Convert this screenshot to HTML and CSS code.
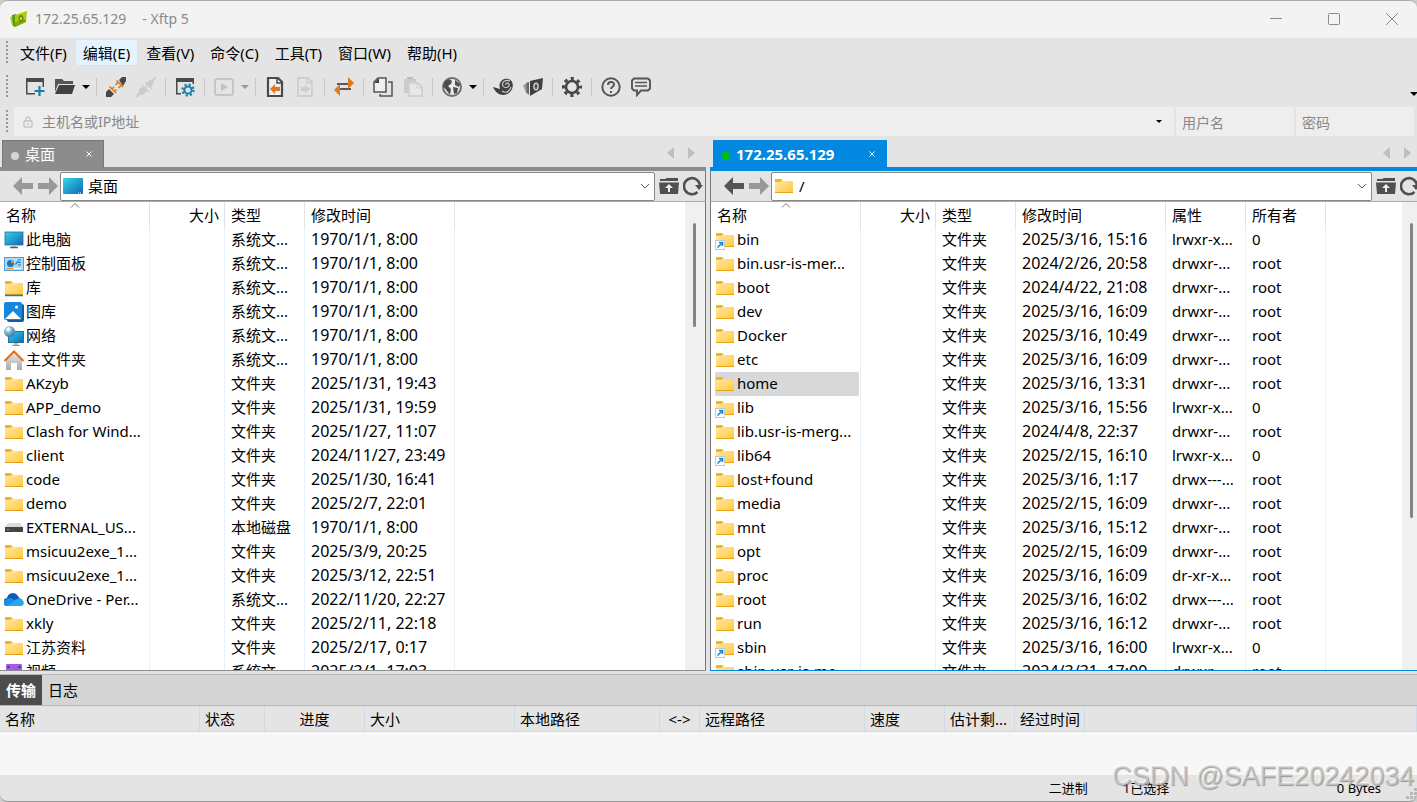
FILE: index.html
```html
<!DOCTYPE html>
<html lang="zh-CN">
<head>
    <meta charset="UTF-8">
    <meta name="viewport" content="width=device-width, initial-scale=1.0">
    <title>172.25.65.129 - Xftp 5</title>
    <link rel="stylesheet" href="styles.css">
</head>
<body>
    <!-- Icon library -->
    <svg class="icon-defs" aria-hidden="true">
        <defs>
            <linearGradient id="gFolder" x1="0" y1="0" x2="1" y2="1">
                <stop offset="0" stop-color="#ffe9a2"/><stop offset="1" stop-color="#ffc83d"/>
            </linearGradient>
            <linearGradient id="gScreen" x1="0" y1="0" x2="1" y2="1">
                <stop offset="0" stop-color="#35d5e8"/><stop offset="1" stop-color="#0f68b8"/>
            </linearGradient>
            <linearGradient id="gHouse" x1="0" y1="0" x2="0" y2="1">
                <stop offset="0" stop-color="#e8e8e8"/><stop offset="1" stop-color="#a9a9a9"/>
            </linearGradient>
            <radialGradient id="gGlobe" cx=".35" cy=".3" r=".8">
                <stop offset="0" stop-color="#c5e8f5"/><stop offset="1" stop-color="#2a6f9c"/>
            </radialGradient>
        </defs>
        <symbol id="i-logo" viewBox="0 0 20 20">
            <path d="M1 8l3-1 2 11-3-2z" fill="#a4cf2c"/>
            <path d="M3 6l4-1v13l-3-1z" fill="#5d9b12"/>
            <path d="M6 6l12-4-1 11-11 5z" fill="#b2cc08"/>
            <path d="M6 13l11-3v3l-11 5z" fill="#7fae0c"/>
            <ellipse cx="12" cy="9.500" rx="2.500" ry="3.500" fill="#5f8d0b"/><ellipse cx="12" cy="9.500" rx="1" ry="1.500" fill="#dbe86d"/>
        </symbol>
        <symbol id="i-new" viewBox="0 0 20 20">
            <path d="M1 1h18v9h-1.500V5h-15v11H10v1.500H1z" fill="#4a4a4a"/>
            <path d="M14.500 9v10M9.500 14h10" stroke="#1b7ca8" stroke-width="2.200"/>
        </symbol>
        <symbol id="i-open" viewBox="0 0 20 20">
            <path d="M0 2h7l2 2h9v3H3L0 15z" fill="#555"/><path d="M4 8h16l-3 9H0z" fill="#404040"/>
        </symbol>
        <symbol id="i-plug" viewBox="0 0 20 20">
            <path d="M13 3l3-3h4v4l-3 5z" fill="#484848"/><path d="M0 20v-5l3-3 5 5-3 3z" fill="#484848"/>
            <path d="M10.500 3.500l6.500 6.500M3.500 9.500L10 16M12 5.500l-2.500 2.500M15 8.500L12.500 11M6 12l2-2M8.500 14.500l2-2" stroke="#dd7a1d" stroke-width="1.700" fill="none"/>
        </symbol>
        <symbol id="i-unplug" viewBox="0 0 20 20">
            <path d="M0 20l5-5M15 5l5-5" stroke="#cbcbcb" stroke-width="2"/>
            <path d="M3 12l4-2 4 4-4 4H4l-1-2zM10 6l4-3h3l1 3-4 5z" fill="#cbcbcb"/>
            <path d="M6 8l7 7M9 5l7 7M8 12l5-5" stroke="#cbcbcb" stroke-width="1.300"/>
        </symbol>
        <symbol id="i-props" viewBox="0 0 20 20">
            <path d="M1 1h18v6h-1.500V5h-15v11H6v1.500H1z" fill="#4a4a4a"/>
            <circle cx="13" cy="13" r="3.600" fill="none" stroke="#1b7ca8" stroke-width="2"/>
            <circle cx="13" cy="13" r="5.500" fill="none" stroke="#1b7ca8" stroke-width="2.200" stroke-dasharray="2.100 2.220"/>
        </symbol>
        <symbol id="i-play" viewBox="0 0 20 20">
            <rect x="1" y="2" width="18" height="16" rx="2" fill="none" stroke="#c6c6c6" stroke-width="2"/><path d="M7 6l7 4-7 4z" fill="#c2c2c2"/>
        </symbol>
        <symbol id="i-down" viewBox="0 0 8 4"><path d="M0 0h8L4 4z" fill="currentColor"/></symbol>
        <symbol id="i-pageleft" viewBox="0 0 20 20">
            <path d="M3 1h10l4 4v14H3z" fill="#f0f0f0" stroke="#4a4a4a" stroke-width="2.200"/><path d="M12 0v6h6" fill="none" stroke="#4a4a4a" stroke-width="1.500"/>
            <path d="M5 12l5-5v3h5v4h-5v3z" fill="#dd7a1d"/>
        </symbol>
        <symbol id="i-pageright" viewBox="0 0 20 20">
            <path d="M3 1h10l4 4v14H3z" fill="none" stroke="#cecece" stroke-width="1.800"/><path d="M12 0v6h6" fill="none" stroke="#cecece" stroke-width="1.500"/>
            <path d="M15 12l-5-4v2H6v4h4v2z" fill="#cecece"/>
        </symbol>
        <symbol id="i-swap" viewBox="0 0 20 20">
            <path d="M3 7h11M6 12h11" stroke="#5a5a5a" stroke-width="2"/>
            <path d="M14 0l6 6-6 6zM6 7v12l-6-6z" fill="#dd7a1d"/>
        </symbol>
        <symbol id="i-copy" viewBox="0 0 20 20">
            <path d="M5 1h8v14H1V5z" fill="#efefef" stroke="#555" stroke-width="1.500"/><path d="M1 6l5-5v5z" fill="#444"/>
            <path d="M15 5h4v14H7v-2" fill="none" stroke="#555" stroke-width="1.500"/>
        </symbol>
        <symbol id="i-paste" viewBox="0 0 20 20">
            <path d="M1 2h12v3H8L5 8v8H1z" fill="#cbcbcb"/><path d="M4 1h6" stroke="#bdbdbd" stroke-width="2"/>
            <path d="M6 6h9l4 4v9H6z" fill="#e8e8e8" stroke="#cbcbcb" stroke-width="1.500"/><path d="M14 6v5h5" fill="none" stroke="#cbcbcb"/>
        </symbol>
        <symbol id="i-globe" viewBox="0 0 20 20">
            <circle cx="10" cy="10" r="9" fill="#e9e9e9" stroke="#707070" stroke-width="2"/>
            <path d="M3 4l4-2 3 2-1 3-3 2 3 3-1 6-3-4-4-5zM13 3l5 4-1 3-4-2zM11 10l5 1-1 5-3 1z" fill="#4c4c4c"/>
        </symbol>
        <symbol id="i-shell" viewBox="0 0 20 20">
            <path d="M0 10l7 2c-2-7 3-11 8-10 6 1 6 9 2 13-5 5-13 4-17-5z" fill="#404040"/>
            <path d="M17 4c-4-2-9 1-7 5 2 3 7 1 6-2-1-2-4-1-3 1M9 14c4 3 8 0 9-4" fill="none" stroke="#c9c9c9" stroke-width="1.200"/>
        </symbol>
        <symbol id="i-xftp" viewBox="0 0 20 20">
            <path d="M0 8l3-1 2 10-2-1z" fill="#999"/><path d="M3 6l3-1v13l-2-2z" fill="#666"/><path d="M7 4l13-3-1 11-12 7z" fill="#404040"/>
            <ellipse cx="13" cy="9.500" rx="2.800" ry="4" fill="#d0d0d0"/><path d="M13 7v5M11.500 9.500h3" stroke="#404040" stroke-width="1.500"/>
        </symbol>
        <symbol id="i-gear" viewBox="0 0 20 20">
            <circle cx="10" cy="10" r="6" fill="none" stroke="#474747" stroke-width="2.500"/>
            <circle cx="10" cy="10" r="8.500" fill="none" stroke="#474747" stroke-width="3" stroke-dasharray="3.200 3.476" stroke-dashoffset="1.600"/>
        </symbol>
        <symbol id="i-help" viewBox="0 0 20 20">
            <circle cx="10" cy="10" r="8.700" fill="none" stroke="#555" stroke-width="2"/>
            <path d="M7 8c0-4 6-4 6-.500 0 2.500-3 2-3 4.500M10 14v2" fill="none" stroke="#555" stroke-width="2"/>
        </symbol>
        <symbol id="i-chat" viewBox="0 0 20 20">
            <path d="M3 1.500h14l2 2v8l-2 2h-7L6 18v-4.500H3l-2-2v-8z" fill="none" stroke="#555" stroke-width="1.900"/><path d="M4 5.500h12M4 9h12" stroke="#555" stroke-width="1.500"/>
        </symbol>
        <symbol id="i-lock" viewBox="0 0 10 12">
            <path d="M1 5h8v6H1zM3 5V2l1-1h2l1 1v3M4 8h2" fill="none" stroke="#b5b5b5"/>
        </symbol>
        <symbol id="i-back" viewBox="0 0 20 18"><path d="M0 9l9-9v6h11v6H9v6z" fill="currentColor"/></symbol>
        <symbol id="i-forward" viewBox="0 0 20 18"><path d="M20 9l-9-9v6H0v6h11v6z" fill="currentColor"/></symbol>
        <symbol id="i-up" viewBox="0 0 20 16">
            <path d="M1 1h5l2-1h11v3H1zM0 4.500h20L19 16H1z" fill="#505050"/><path d="M10 6l4 4h-3v4H9v-4H6z" fill="#eee"/>
        </symbol>
        <symbol id="i-refresh" viewBox="0 0 20 20">
            <path d="M14.500 16A8 8 0 1 1 17 10" fill="none" stroke="#505050" stroke-width="2.600"/><path d="M12 9h8l-4 5z" fill="#505050"/>
        </symbol>
        <symbol id="i-chevron" viewBox="0 0 10 6"><path d="M1 1l4 4 4-4" fill="none" stroke="#555"/></symbol>
        <symbol id="i-sort" viewBox="0 0 10 5"><path d="M1 4.500L5 .500l4 4" fill="none" stroke="#777"/></symbol>
        <symbol id="i-prev" viewBox="0 0 7 12"><path d="M7 0v12L0 6z" fill="#bfbfbf"/></symbol>
        <symbol id="i-next" viewBox="0 0 7 12"><path d="M0 0v12l7-6z" fill="#bfbfbf"/></symbol>
        <symbol id="i-close" viewBox="0 0 6 6"><path d="M.500 .500l5 5M5.500 .500l-5 5" stroke="#fff"/></symbol>
        <symbol id="i-desktop" viewBox="0 0 20 16"><rect width="20" height="16" rx="1" fill="url(#gScreen)"/><path d="M15 15h1M17 15h1" stroke="#fff"/></symbol>
        <symbol id="i-grip" viewBox="0 0 11 11"><path d="M8 0h3v3H8zM4 4h3v3H4zM8 4h3v3H8zM0 8h3v3H0zM4 8h3v3H4zM8 8h3v3H8z" fill="#b8b8b8"/></symbol>

        <!-- file list icons -->
        <symbol id="i-folder" viewBox="0 0 20 20">
            <path d="M1 3h6l2 2h-2l-1 3H1z" fill="#f7b31a"/><path d="M1 6h5l2-1h11v12H1z" fill="url(#gFolder)"/><path d="M1 16.500h18" stroke="#e5a11a"/>
        </symbol>
        <symbol id="i-link" viewBox="0 0 20 20">
            <use href="#i-folder"/>
            <rect x=".500" y="10.500" width="9" height="9" fill="#fff" stroke="#c0c8d0"/><path d="M2.500 17.500L7 13M4 12.500h3.500V16" fill="none" stroke="#1583d8" stroke-width="1.500"/>
        </symbol>
        <symbol id="i-lib" viewBox="0 0 20 20"><use href="#i-folder"/><path d="M1 17.500h18" stroke="#1580c8" stroke-width="1.500"/></symbol>
        <symbol id="i-pc" viewBox="0 0 20 20">
            <rect x="1" y="2" width="18" height="13" fill="url(#gScreen)" stroke="#2b6d94" stroke-width=".800"/><path d="M8 15h4v2H8z" fill="#c0c5c8"/><path d="M6 17.500h8" stroke="#505b62" stroke-width="1.500"/>
        </symbol>
        <symbol id="i-panel" viewBox="0 0 20 20">
            <rect x=".500" y="3.500" width="19" height="13" fill="#a8ddf7" stroke="#4b9fd6"/>
            <circle cx="6.500" cy="9.500" r="3.500" fill="#1b75bb"/><path d="M7 9V6a3.500 3.500 0 0 1 3 3z" fill="#f58a1f"/>
            <path d="M11 10h1l2-3M14 6h3M14 8.500h3M14 11h3" stroke="#1b6fae" stroke-width="1.200" fill="none"/><path d="M3 14.500h6" stroke="#f58a1f"/><path d="M10 14.500h7" stroke="#fff"/>
        </symbol>
        <symbol id="i-gallery" viewBox="0 0 20 20">
            <rect x="3" y="2" width="17" height="18" rx="2" fill="#0c5ca8"/><rect width="18" height="18" rx="2" fill="#1488da"/><path d="M1 17l8-8 8 8z" fill="#fff"/><circle cx="12.500" cy="5" r="1.500" fill="#fff"/>
        </symbol>
        <symbol id="i-net" viewBox="0 0 20 20">
            <rect x="4.500" y="5.500" width="15" height="11" fill="url(#gScreen)" stroke="#2b6d94"/><path d="M10 17h4v2h-4z" fill="#b7bdc0"/><path d="M8 19.500h8" stroke="#8a9499"/><circle cx="5.500" cy="5.500" r="5.500" fill="url(#gGlobe)"/><path d="M2 3l3-2 2 2-3 3z" fill="#e5f5fb"/>
        </symbol>
        <symbol id="i-home" viewBox="0 0 20 20">
            <path d="M2 10l8-8 8 8v10h-5v-7H7v7H2z" fill="url(#gHouse)"/><path d="M.500 11L10 1.500l9.500 9.500" fill="none" stroke="#ea6a14" stroke-width="2"/>
        </symbol>
        <symbol id="i-drive" viewBox="0 0 20 20">
            <path d="M4 5h12l3 4H1z" fill="#dcdcdf"/><rect x="1" y="9" width="18" height="5" fill="#454545"/><path d="M3 11.500h2" stroke="#39d353"/>
        </symbol>
        <symbol id="i-cloud" viewBox="0 0 20 20">
            <path d="M4 16a4 4 0 0 1-1-8 6 6 0 0 1 11-2l2 3-8 6z" fill="#0a5cb8"/><path d="M3 16a3.500 3.500 0 0 1 0-7c2-2 5-1 7 1l3-1a3.500 3.500 0 0 1 4 7z" fill="#1a8fe3"/><path d="M3 16l9-6a4 4 0 0 1 7 1c2 2 0 5-2 5z" fill="#28a8ea"/>
        </symbol>
        <symbol id="i-video" viewBox="0 0 20 20">
            <rect x="2" y="2" width="16" height="18" rx="1" fill="#a15be8"/><path d="M4.500 4v14M15.500 4v14" stroke="#4a3080" stroke-width="2" stroke-dasharray="2 2"/><path d="M7 8l6 3-6 3z" fill="#fff"/>
        </symbol>
    </svg>

    <header class="titlebar">
        <svg class="icon"><use href="#i-logo"/></svg>
        <span class="title-host">172.25.65.129</span>
        <span>- Xftp 5</span>
        <div class="window-buttons">
            <button aria-label="最小化"><svg viewBox="0 0 12 12"><path d="M0 5.500h12"/></svg></button>
            <button aria-label="最大化"><svg viewBox="0 0 12 12"><rect x=".500" y=".500" width="11" height="11" rx="1"/></svg></button>
            <button aria-label="关闭"><svg viewBox="0 0 12 12"><path d="M0 0l12 12M12 0L0 12"/></svg></button>
        </div>
    </header>

    <nav class="menubar grip">
        <button>文件(F)</button>
        <button class="active">编辑(E)</button>
        <button>查看(V)</button>
        <button>命令(C)</button>
        <button>工具(T)</button>
        <button>窗口(W)</button>
        <button>帮助(H)</button>
    </nav>

    <div class="toolbar grip" id="toolbar"></div>

    <form class="connectbar grip">
        <div class="host">
            <svg class="lock"><use href="#i-lock"/></svg>
            <input type="text" aria-label="主机名或IP地址" placeholder="主机名或IP地址">
            <button type="button" aria-label="历史"><svg class="caret small"><use href="#i-down"/></svg></button>
        </div>
        <input class="login" type="text" aria-label="用户名" placeholder="用户名">
        <input class="login" type="password" aria-label="密码" placeholder="密码">
    </form>

    <main class="panes">
        <section class="pane local">
            <div class="tabs">
                <div class="tab">
                    <span class="dot"></span>
                    <a href="#local">桌面</a>
                    <button aria-label="关闭标签"><svg><use href="#i-close"/></svg></button>
                </div>
                <div class="tab-scroll">
                    <button aria-label="上一个"><svg><use href="#i-prev"/></svg></button>
                    <button aria-label="下一个"><svg><use href="#i-next"/></svg></button>
                </div>
            </div>
            <div class="pathbar">
                <button class="nav off" aria-label="后退"><svg><use href="#i-back"/></svg></button>
                <button class="nav off" aria-label="前进"><svg><use href="#i-forward"/></svg></button>
                <div class="path">
                    <svg class="desktop"><use href="#i-desktop"/></svg>
                    <input type="text" aria-label="本地路径" value="桌面">
                    <button aria-label="展开"><svg><use href="#i-chevron"/></svg></button>
                </div>
                <button class="act" aria-label="上级目录"><svg class="up"><use href="#i-up"/></svg></button>
                <button class="act" aria-label="刷新"><svg><use href="#i-refresh"/></svg></button>
            </div>
            <div class="list" id="local">
                <table class="files">
                    <colgroup><col class="w150"><col class="w75"><col class="w80"><col class="w150"><col></colgroup>
                    <thead><tr><th>名称<svg class="sort"><use href="#i-sort"/></svg></th><th class="size">大小</th><th>类型</th><th>修改时间</th><th></th></tr></thead>
                    <tbody id="localFiles"></tbody>
                </table>
                <div class="scrollbar"><span class="thumb"></span></div>
            </div>
        </section>

        <section class="pane remote">
            <div class="tabs">
                <div class="tab">
                    <span class="dot"></span>
                    <a href="#remote">172.25.65.129</a>
                    <button aria-label="关闭标签"><svg><use href="#i-close"/></svg></button>
                </div>
                <div class="tab-scroll">
                    <button aria-label="上一个"><svg><use href="#i-prev"/></svg></button>
                    <button aria-label="下一个"><svg><use href="#i-next"/></svg></button>
                </div>
            </div>
            <div class="pathbar">
                <button class="nav" aria-label="后退"><svg><use href="#i-back"/></svg></button>
                <button class="nav off" aria-label="前进"><svg><use href="#i-forward"/></svg></button>
                <div class="path">
                    <svg class="icon"><use href="#i-folder"/></svg>
                    <input type="text" aria-label="远程路径" value="/">
                    <button aria-label="展开"><svg><use href="#i-chevron"/></svg></button>
                </div>
                <button class="act" aria-label="上级目录"><svg class="up"><use href="#i-up"/></svg></button>
                <button class="act" aria-label="刷新"><svg><use href="#i-refresh"/></svg></button>
            </div>
            <div class="list" id="remote">
                <table class="files">
                    <colgroup><col class="w150"><col class="w75"><col class="w80"><col class="w150"><col class="w80"><col class="w80"><col></colgroup>
                    <thead><tr><th>名称<svg class="sort"><use href="#i-sort"/></svg></th><th class="size">大小</th><th>类型</th><th>修改时间</th><th>属性</th><th>所有者</th><th></th></tr></thead>
                    <tbody id="remoteFiles"></tbody>
                </table>
                <div class="scrollbar"><span class="thumb"></span></div>
            </div>
        </section>
    </main>

    <section class="transfer">
        <div class="transfer-tabs">
            <button class="active">传输</button>
            <button>日志</button>
        </div>
        <table class="queue">
            <colgroup><col class="w200"><col class="w65"><col class="w100"><col class="w150"><col class="w145"><col class="w40"><col class="w165"><col class="w80"><col class="w70"><col class="w70"><col></colgroup>
            <thead>
                <tr><th>名称</th><th>状态</th><th class="mid">进度</th><th>大小</th><th>本地路径</th><th class="mid">&lt;-&gt;</th><th>远程路径</th><th>速度</th><th>估计剩...</th><th>经过时间</th><th></th></tr>
            </thead>
        </table>
    </section>

    <footer class="statusbar">
        <span class="mode">二进制</span>
        <span class="selected">1已选择</span>
        <span class="bytes">0 Bytes</span>
        <svg class="resize"><use href="#i-grip"/></svg>
    </footer>
    <div class="watermark">CSDN @SAFE20242034</div>

    <script>
        // "|" is a separator, "v" a drop-down arrow, "v-" a disabled one
        const tools = ["new", "open", "v", "|", "plug", "unplug", "|", "props", "|", "play", "v-", "|",
            "pageleft", "pageright", "|", "swap", "|", "copy", "paste", "|", "globe", "v", "|",
            "shell", "xftp", "|", "gear", "|", "help", "chat", "end"];

        document.getElementById("toolbar").innerHTML = tools.map(t => {
            if (t === "|") return `<span class="sep"></span>`;
            if (t === "end") return `<button class="more" aria-label="more"><svg class="caret"><use href="#i-down"/></svg></button>`;
            if (t[0] === "v") return `<button class="drop ${t === "v-" ? "off" : ""}" aria-label="menu"><svg class="caret"><use href="#i-down"/></svg></button>`;
            return `<button class="tool" aria-label="${t}"><svg class="icon"><use href="#i-${t}"/></svg></button>`;
        }).join("");

        // icon, name, type, modified
        const localFiles = [
            ["pc", "此电脑", "系统文...", "1970/1/1, 8:00"],
            ["panel", "控制面板", "系统文...", "1970/1/1, 8:00"],
            ["lib", "库", "系统文...", "1970/1/1, 8:00"],
            ["gallery", "图库", "系统文...", "1970/1/1, 8:00"],
            ["net", "网络", "系统文...", "1970/1/1, 8:00"],
            ["home", "主文件夹", "系统文...", "1970/1/1, 8:00"],
            ["folder", "AKzyb", "文件夹", "2025/1/31, 19:43"],
            ["folder", "APP_demo", "文件夹", "2025/1/31, 19:59"],
            ["folder", "Clash for Wind...", "文件夹", "2025/1/27, 11:07"],
            ["folder", "client", "文件夹", "2024/11/27, 23:49"],
            ["folder", "code", "文件夹", "2025/1/30, 16:41"],
            ["folder", "demo", "文件夹", "2025/2/7, 22:01"],
            ["drive", "EXTERNAL_US...", "本地磁盘", "1970/1/1, 8:00"],
            ["folder", "msicuu2exe_1...", "文件夹", "2025/3/9, 20:25"],
            ["folder", "msicuu2exe_1...", "文件夹", "2025/3/12, 22:51"],
            ["cloud", "OneDrive - Per...", "系统文...", "2022/11/20, 22:27"],
            ["folder", "xkly", "文件夹", "2025/2/11, 22:18"],
            ["folder", "江苏资料", "文件夹", "2025/2/17, 0:17"],
            ["video", "视频", "系统文...", "2025/3/1, 17:03"]
        ];

        // icon, name, type, modified, attributes, owner
        const remoteFiles = [
            ["link", "bin", "文件夹", "2025/3/16, 15:16", "lrwxr-x...", "0"],
            ["folder", "bin.usr-is-mer...", "文件夹", "2024/2/26, 20:58", "drwxr-...", "root"],
            ["folder", "boot", "文件夹", "2024/4/22, 21:08", "drwxr-...", "root"],
            ["folder", "dev", "文件夹", "2025/3/16, 16:09", "drwxr-...", "root"],
            ["folder", "Docker", "文件夹", "2025/3/16, 10:49", "drwxr-...", "root"],
            ["folder", "etc", "文件夹", "2025/3/16, 16:09", "drwxr-...", "root"],
            ["folder", "home", "文件夹", "2025/3/16, 13:31", "drwxr-...", "root"],
            ["link", "lib", "文件夹", "2025/3/16, 15:56", "lrwxr-x...", "0"],
            ["folder", "lib.usr-is-merg...", "文件夹", "2024/4/8, 22:37", "drwxr-...", "root"],
            ["link", "lib64", "文件夹", "2025/2/15, 16:10", "lrwxr-x...", "0"],
            ["folder", "lost+found", "文件夹", "2025/3/16, 1:17", "drwx---...", "root"],
            ["folder", "media", "文件夹", "2025/2/15, 16:09", "drwxr-...", "root"],
            ["folder", "mnt", "文件夹", "2025/3/16, 15:12", "drwxr-...", "root"],
            ["folder", "opt", "文件夹", "2025/2/15, 16:09", "drwxr-...", "root"],
            ["folder", "proc", "文件夹", "2025/3/16, 16:09", "dr-xr-x...", "root"],
            ["folder", "root", "文件夹", "2025/3/16, 16:02", "drwx---...", "root"],
            ["folder", "run", "文件夹", "2025/3/16, 16:12", "drwxr-...", "root"],
            ["link", "sbin", "文件夹", "2025/3/16, 16:00", "lrwxr-x...", "0"],
            ["folder", "sbin.usr-is-me...", "文件夹", "2024/3/31, 17:00", "drwxr-...", "root"]
        ];

        function fillTable(id, files) {
            document.getElementById(id).innerHTML = files.map(([icon, name, type, modified, ...rest]) => `
                <tr>
                    <td class="name"><div class="${name === "home" ? "selected" : ""}"><svg class="icon"><use href="#i-${icon}"/></svg><span>${name}</span></div></td>
                    <td></td>
                    <td>${type}</td>
                    <td class="time">${modified}</td>
                    ${rest.map(value => `<td>${value}</td>`).join("")}
                    <td></td>
                </tr>`).join("");
        }

        fillTable("localFiles", localFiles);
        fillTable("remoteFiles", remoteFiles);
    </script>
</body>
</html>
```
FILE: styles.css
```css
* {
    box-sizing: border-box;
}
body {
    margin: 0;
    height: 100vh;
    display: flex;
    flex-direction: column;
    overflow: hidden;
    border-top: 1px solid #aaa;
    border-bottom: 1px solid #999;
    border-radius: 8px;
    background-color: #e4e4e4;
    color: #000;
    font-family: "Noto Sans", "Noto Sans CJK SC", sans-serif;
    font-size: 15px;
    line-height: 20px;
}
html {
    background-color: #ccc;
}
button, input {
    font: inherit;
    color: inherit;
    border: 0;
    padding: 0;
    margin: 0;
    background: none;
    outline: 0;
}
button {
    display: flex;
    align-items: center;
    justify-content: center;
}
input {
    min-width: 0;
}
svg {
    flex: none;
}
.icon {
    width: 20px;
    height: 20px;
}
.icon-defs {
    position: absolute;
    width: 0;
    height: 0;
}

/* title bar */
.titlebar {
    display: flex;
    align-items: center;
    height: 37px;
    padding: 0 0 2px 9px;
    background-color: #f3f3f3;
    color: #8a8a8a;
    font-size: 14px;
}
.title-host {
    margin: 0 16px 0 6px;
}
.window-buttons {
    display: flex;
    margin-left: auto;
    margin-right: -4px;
}
.window-buttons button {
    width: 58px;
    height: 35px;
}
.window-buttons svg {
    width: 12px;
    height: 12px;
    fill: none;
    stroke: #8a8a8a;
}

/* menu and tool bars */
.grip::before {
    content: "";
    width: 2px;
    height: 24px;
    margin: 0 6px;
    background: repeating-linear-gradient(#999 0 2px, transparent 2px 4px);
}
.menubar {
    display: flex;
    align-items: center;
    height: 31px;
    padding-bottom: 2px;
}
.menubar button {
    height: 27px;
    padding: 0 7px;
    border: 1px solid transparent;
    border-radius: 2px;
}
.menubar::before {
    margin-right: 4px;
}
.menubar .active {
    background-color: #e5f3ff;
    border-color: #cce8ff;
}
.toolbar {
    display: flex;
    align-items: center;
    height: 36px;
}
.tool {
    width: 30px;
    height: 30px;
}
.drop {
    width: 12px;
    height: 30px;
}
.caret {
    width: 8px;
    height: 4px;
}
.caret.small {
    width: 6px;
    height: 3px;
}
.off {
    color: #999;
}
.sep {
    width: 1px;
    height: 18px;
    margin: 0 4px;
    background-color: #c8c8c8;
}
.toolbar .tool:first-of-type {
    margin-left: 6px;
}
.more {
    margin: 14px -1px 0 auto;
}

/* quick connect */
.connectbar {
    display: flex;
    align-items: center;
    gap: 2px;
    height: 31px;
    padding: 2px 3px 0 0;
    color: #888;
    font-size: 14px;
}
.connectbar::before {
    margin: 0 4px 0 6px;
}
.host {
    display: flex;
    align-items: center;
    flex: 1;
    height: 29px;
    padding: 0 12px 0 9px;
    background-color: #eee;
}
.host input {
    flex: 1;
    margin-left: 9px;
}
.host button {
    color: #000;
}
.lock {
    width: 10px;
    height: 12px;
}
.login {
    width: 118px;
    height: 29px;
    padding: 2px 6px 0;
    background-color: #eee;
}
::placeholder {
    color: #888;
    opacity: 1;
}

/* file panes */
.panes {
    display: grid;
    grid-template-columns: 706fr 712fr;
    gap: 4px;
    flex: 1;
    min-height: 0;
    margin-right: -5px;
    margin-top: -1px;
}
.pane {
    display: flex;
    flex-direction: column;
    min-width: 0;
    min-height: 0;
    border-bottom: 1px solid #8c8c8c;
}
.pane.remote {
    border-bottom-color: #0288e0;
}
.tabs {
    display: flex;
    align-items: flex-end;
    height: 36px;
    padding-left: 2px;
    border-bottom: 4px solid #8c8c8c;
}
.remote .tabs {
    padding-left: 3px;
    border-color: #0288e0;
}
.tab {
    display: flex;
    align-items: center;
    width: 102px;
    height: 27px;
    padding: 0 11px 0 8px;
    background-color: #8c8c8c;
    border: 1px solid #777;
    border-bottom: 0;
    color: #fff;
}
.remote .tab {
    width: 174px;
    background-color: #0288e0;
    border-color: #0288e0;
    font-weight: bold;
}
.tab a {
    flex: 1;
    color: inherit;
    text-decoration: none;
}
.dot {
    width: 8px;
    height: 8px;
    margin: 3px 6px 0 0;
    border-radius: 50%;
    background-color: #d5d5d5;
}
.remote .dot {
    background-color: #00c000;
}
.tab svg {
    width: 6px;
    height: 6px;
}
.tab-scroll {
    display: flex;
    gap: 14px;
    margin: 0 11px 8px auto;
}
.tab-scroll svg {
    width: 7px;
    height: 12px;
}
.pathbar {
    display: flex;
    align-items: center;
    height: 31px;
    padding: 0 2px 0 13px;
    border-bottom: 1px solid #aaa;
    border-right: 1px solid #777;
}
.remote .pathbar,
.remote .list {
    border-right: 0;
    border-left: 1px solid #777;
}
.nav {
    width: 20px;
    margin-right: 5px;
    color: #555;
}
.nav.off {
    color: #999;
}
.nav + .nav {
    margin-right: 2px;
}
.nav svg {
    width: 20px;
    height: 18px;
}
.path {
    display: flex;
    align-items: center;
    flex: 1;
    min-width: 0;
    height: 29px;
    padding: 0 4px 0 2px;
    background-color: #fff;
    border: 1px solid #888;
    border-radius: 2px;
}
.path input {
    flex: 1;
    margin-left: 5px;
}
.path button svg {
    width: 10px;
    height: 6px;
}
.desktop {
    width: 20px;
    height: 16px;
}
.act {
    width: 20px;
    margin-left: 4px;
}
.act svg {
    width: 20px;
    height: 20px;
}
.act .up {
    height: 16px;
}
.list {
    display: flex;
    align-items: flex-start;
    flex: 1;
    min-height: 0;
    overflow: hidden;
    background-color: #fff;
    border-right: 1px solid #777;
}
.scrollbar {
    flex: none;
    align-self: stretch;
    width: 20px;
    padding: 21px 0 0 8px;
    background-color: #f0f0f0;
}
.thumb {
    display: block;
    width: 3px;
    height: 104px;
    border-radius: 2px;
    background-color: #858585;
}
.remote .thumb {
    height: 295px;
}
table {
    border-collapse: separate;
    border-spacing: 0;
    table-layout: fixed;
}
th, td {
    padding: 0 0 0 6px;
    text-align: left;
    font-weight: normal;
    white-space: nowrap;
    overflow: hidden;
}
.files {
    flex: 1;
    width: 0;
    min-width: 0;
}
.files th {
    position: relative;
    height: 26px;
    border-right: 1px solid #e3e3e3;
}
.files td {
    height: 24px;
    padding-bottom: 2px;
    border-right: 1px solid #e8f1fb;
}
.files th:last-child,
.files td:last-child {
    border-right: 0;
}
.files .size {
    padding-right: 5px;
    text-align: right;
}
.files .time {
    font-size: 16px;
}
.sort {
    position: absolute;
    top: 1px;
    left: 50%;
    width: 10px;
    height: 5px;
    margin-left: -5px;
}
.files .name {
    padding: 0 1px 0 4px;
}
.name div {
    display: flex;
    align-items: center;
    height: 24px;
}
.name span {
    margin: 0 0 2px 2px;
}
.name .selected {
    background-color: #d8d8d8;
    border-radius: 2px;
}
.w40 { width: 40px; }
.w65 { width: 65px; }
.w70 { width: 70px; }
.w75 { width: 75px; }
.w80 { width: 80px; }
.w100 { width: 100px; }
.w145 { width: 145px; }
.w150 { width: 150px; }
.w165 { width: 165px; }
.w200 { width: 200px; }

/* transfer queue */
.transfer {
    height: 101px;
    margin-top: 3px;
    background-color: #f7f7f7;
    border-top: 1px solid #b5b5b5;
}
.transfer-tabs {
    display: flex;
    height: 31px;
    background-color: #d5d5d5;
    border-bottom: 1px solid #b5b5b5;
}
.transfer-tabs button {
    width: 42px;
}
.transfer-tabs .active {
    background-color: #4c4c4c;
    color: #fff;
    font-weight: bold;
}
.queue {
    width: 100%;
}
.queue th {
    height: 26px;
    padding: 0 0 0 5px;
    background-color: #e4e4e4;
    border-right: 1px solid #d0dae8;
    border-bottom: 1px solid #d0dae8;
}
.queue .mid {
    padding: 0;
    text-align: center;
}

/* status bar */
.statusbar {
    display: flex;
    align-items: center;
    justify-content: flex-end;
    height: 26px;
    font-size: 13px;
}
.mode {
    margin-right: 35px;
}
.statusbar .selected {
    width: 214px;
}
.resize {
    align-self: flex-end;
    width: 11px;
    height: 11px;
    margin: 0 0 2px 25px;
}
.watermark {
    position: absolute;
    right: 3px;
    bottom: 10px;
    color: rgba(205, 205, 205, 0.7);
    font-family: "Liberation Sans", sans-serif;
    font-size: 27px;
    line-height: 32px;
    text-shadow: 1px 1px 1px rgba(120, 120, 120, 0.7), -1px -1px 0 rgba(255, 255, 255, 0.7);
}
```
